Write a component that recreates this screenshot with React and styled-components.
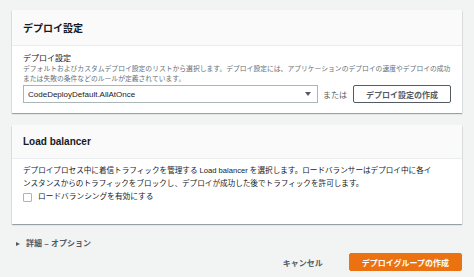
import React, { useState } from "react";
import styled, { createGlobalStyle } from "styled-components";

const GlobalStyle = createGlobalStyle`
  body {
    margin: 0;
    background: #f2f3f3;
    font-family: "Liberation Sans", "Noto Sans CJK JP", sans-serif;
    color: #16191f;
  }
`;

const Page = styled.div`
  padding: 10px 12px 0;
  height: 267px;
`;

const Card = styled.section`
  background: #fff;
  box-shadow: 0 1px 1px 0 rgba(0, 28, 36, 0.3), 1px 1px 1px -1px rgba(0, 28, 36, 0.3),
    -1px 1px 1px -1px rgba(0, 28, 36, 0.3);
  & + & {
    margin-top: 12px;
  }
`;

const CardHeader = styled.h2`
  margin: 0;
  height: ${props => props.h}px;
  display: flex;
  align-items: center;
  padding: 0 11px;
  background: #fafafa;
  border-bottom: 1px solid #eaeded;
  font-size: 10px;
  font-weight: bold;
`;

const CardBody = styled.div`
  padding: ${props => props.pad};
`;

const Label = styled.div`
  font-size: 8px;
  line-height: 10px;
`;

const Hint = styled.div`
  font-size: 6.8px;
  line-height: 10px;
  color: #687078;
  white-space: nowrap;
`;

const Row = styled.div`
  display: flex;
  align-items: center;
  margin-top: 1px;
`;

const Select = styled.div`
  width: 295px;
  height: 18px;
  box-sizing: border-box;
  border: 1px solid #aab7b8;
  display: flex;
  align-items: center;
  justify-content: space-between;
  padding: 0 5px 0 4px;
  font-size: 8px;
`;

const Caret = styled.span`
  width: 0;
  height: 0;
  border-left: 3px solid transparent;
  border-right: 3px solid transparent;
  border-top: 4px solid #545b64;
  margin-right: 1px;
`;

const Or = styled.span`
  font-size: 8px;
  color: #545b64;
  margin: 0 6px 0 5px;
`;

const Button = styled.button`
  height: 18px;
  box-sizing: border-box;
  padding: 0 12px;
  font-family: inherit;
  font-size: 8px;
  font-weight: bold;
  border-radius: 2px;
  cursor: pointer;
  border: 1px solid ${props => (props.primary ? "#ec7211" : props.link ? "transparent" : "#545b64")};
  background: ${props => (props.primary ? "#ec7211" : props.link ? "transparent" : "#fff")};
  color: ${props => (props.primary ? "#fff" : "#545b64")};
`;

const Text = styled.p`
  margin: 0;
  font-size: 7.6px;
  line-height: 13px;
  white-space: nowrap;
`;

const Check = styled.label`
  display: flex;
  align-items: center;
  gap: 6px;
  margin-top: 1px;
  font-size: 7.7px;
  line-height: 12px;
`;

const Box = styled.span`
  width: 7px;
  height: 7px;
  border: 1px solid #aab7b8;
  border-radius: 1px;
  background: ${props => (props.on ? "#0073bb" : "#fff")};
`;

const Expander = styled.div`
  margin-top: 14px;
  display: flex;
  align-items: center;
  gap: 6px;
  padding-left: 4px;
  font-size: 8px;
  line-height: 12px;
  font-weight: bold;
  color: #545b64;
`;

const Arrow = styled.span`
  width: 0;
  height: 0;
  border-top: 2.5px solid transparent;
  border-bottom: 2.5px solid transparent;
  border-left: 4px solid #545b64;
`;

const Actions = styled.div`
  display: flex;
  justify-content: flex-end;
  align-items: center;
  gap: 13px;
  margin-top: 3px;
`;

export default function App() {
  const [lb, setLb] = useState(false);
  return (
    <>
      <GlobalStyle />
      <Page>
        <Card>
          <CardHeader h={35}>デプロイ設定</CardHeader>
          <CardBody pad="8px 11px 10px">
            <Label>デプロイ設定</Label>
            <Hint>
              デフォルトおよびカスタムデプロイ設定のリストから選択します。デプロイ設定には、アプリケーションのデプロイの速度やデプロイの成功
              <br />
              または失敗の条件などのルールが定義されています。
            </Hint>
            <Row>
              <Select>
                CodeDeployDefault.AllAtOnce
                <Caret />
              </Select>
              <Or>または</Or>
              <Button>デプロイ設定の作成</Button>
            </Row>
          </CardBody>
        </Card>
        <Card>
          <CardHeader h={33}>Load balancer</CardHeader>
          <CardBody pad="5px 11px 21px">
            <Text>
              デプロイプロセス中に着信トラフィックを管理する Load balancer を選択します。ロードバランサーはデプロイ中に各イ
              <br />
              ンスタンスからのトラフィックをブロックし、デプロイが成功した後でトラフィックを許可します。
            </Text>
            <Check onClick={() => setLb(!lb)}>
              <Box on={lb} />
              ロードバランシングを有効にする
            </Check>
          </CardBody>
        </Card>
        <Expander>
          <Arrow />
          詳細 – オプション
        </Expander>
        <Actions>
          <Button link>キャンセル</Button>
          <Button primary>デプロイグループの作成</Button>
        </Actions>
      </Page>
    </>
  );
}
